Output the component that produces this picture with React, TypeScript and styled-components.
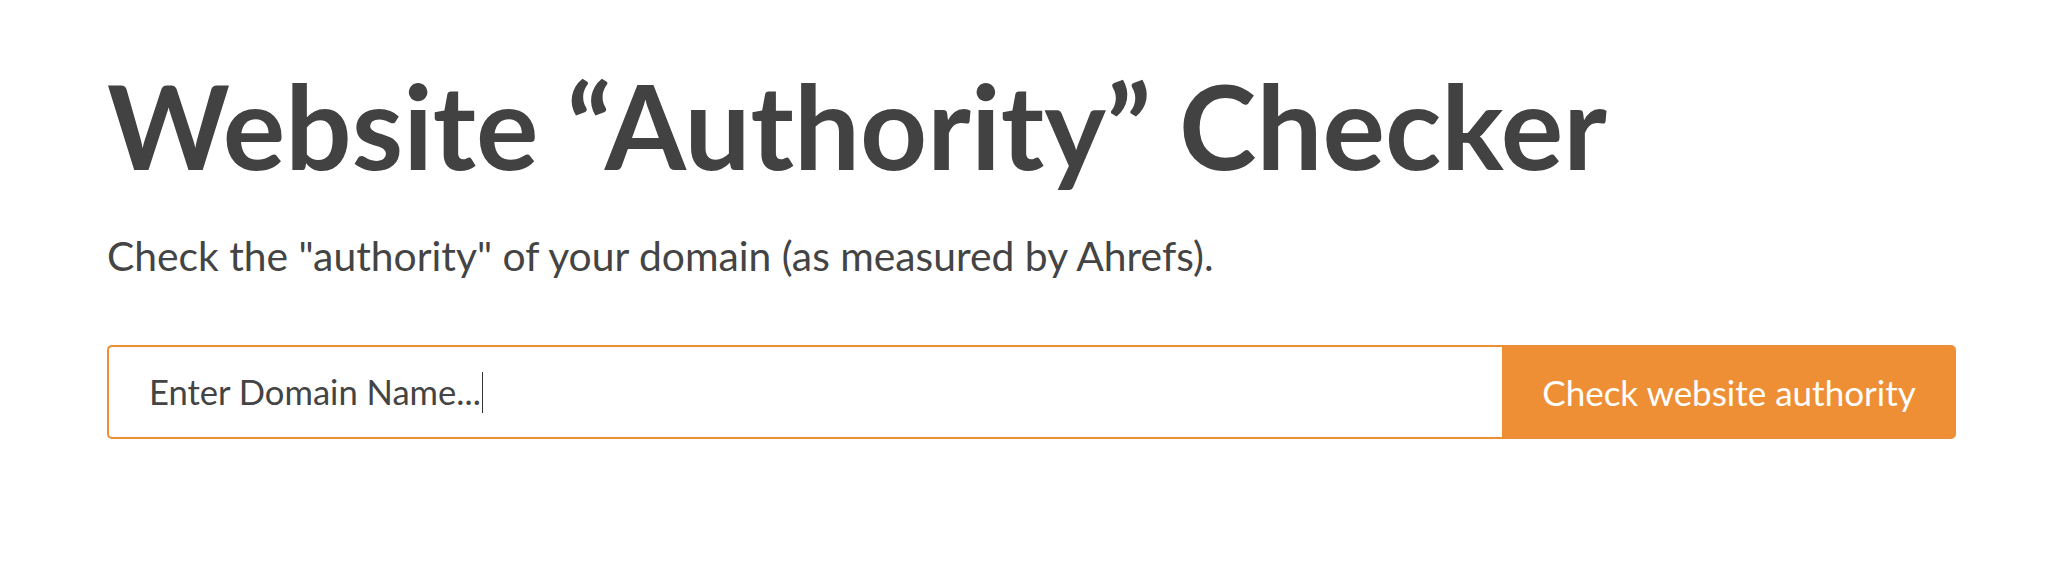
import styled, { createGlobalStyle } from "styled-components";

const GlobalStyle = createGlobalStyle`
  html, body {
    margin: 0;
    padding: 0;
    background: #ffffff;
  }
  body {
    font-family: Lato, "Open Sans", "Liberation Sans", sans-serif;
    color: #424242;
  }
`;

export default function App() {
  return (
    <>
      <GlobalStyle />
      <Page>
        <Title>Website “Authority” Checker</Title>
        <SubTitle>
          Check the "authority" of your domain (as measured by Ahrefs).
        </SubTitle>
        <SearchForm onSubmit={(e) => e.preventDefault()}>
          <Field>
            <FieldText>Enter Domain Name...</FieldText>
            <Caret />
          </Field>
          <SubmitButton type="submit">Check website authority</SubmitButton>
        </SearchForm>
      </Page>
    </>
  );
}

// 전체 레이아웃
const Page = styled.div`
  width: 1956px;
  height: 575px;
  box-sizing: border-box;
  display: flex;
  flex-direction: column;
  padding: 55px 0 0 107px;
`;

// 제목
const Title = styled.h1`
  margin: 0;
  font-size: 117px;
  font-weight: 700;
  line-height: 1.2;
  color: #424242;
  white-space: nowrap;
`;

const SubTitle = styled.p`
  margin: 37px 0 0;
  font-size: 40.8px;
  font-weight: 400;
  line-height: 1.2;
  color: #444444;
`;

// 검색 폼
const SearchForm = styled.form`
  margin-top: 64px;
  height: 94px;
  display: flex;
  flex-direction: row;
`;

const Field = styled.div`
  flex: 1;
  display: flex;
  align-items: center;
  box-sizing: border-box;
  padding-left: 40px;
  border: 2px solid #ef8f35;
  border-right: none;
  border-radius: 5px 0 0 5px;
  background: #ffffff;
`;

const FieldText = styled.span`
  font-size: 34.6px;
  color: #444444;
  line-height: 1;
`;

const Caret = styled.span`
  display: inline-block;
  width: 1.5px;
  height: 41px;
  margin-left: 1px;
  background: #333333;
`;

const SubmitButton = styled.button`
  width: 454px;
  border: none;
  border-radius: 0 5px 5px 0;
  background: #ef8f35;
  color: #ffffff;
  font-family: Lato, "Open Sans", "Liberation Sans", sans-serif;
  font-size: 35px;
  font-weight: 400;
  padding: 0;
  cursor: pointer;
`;
